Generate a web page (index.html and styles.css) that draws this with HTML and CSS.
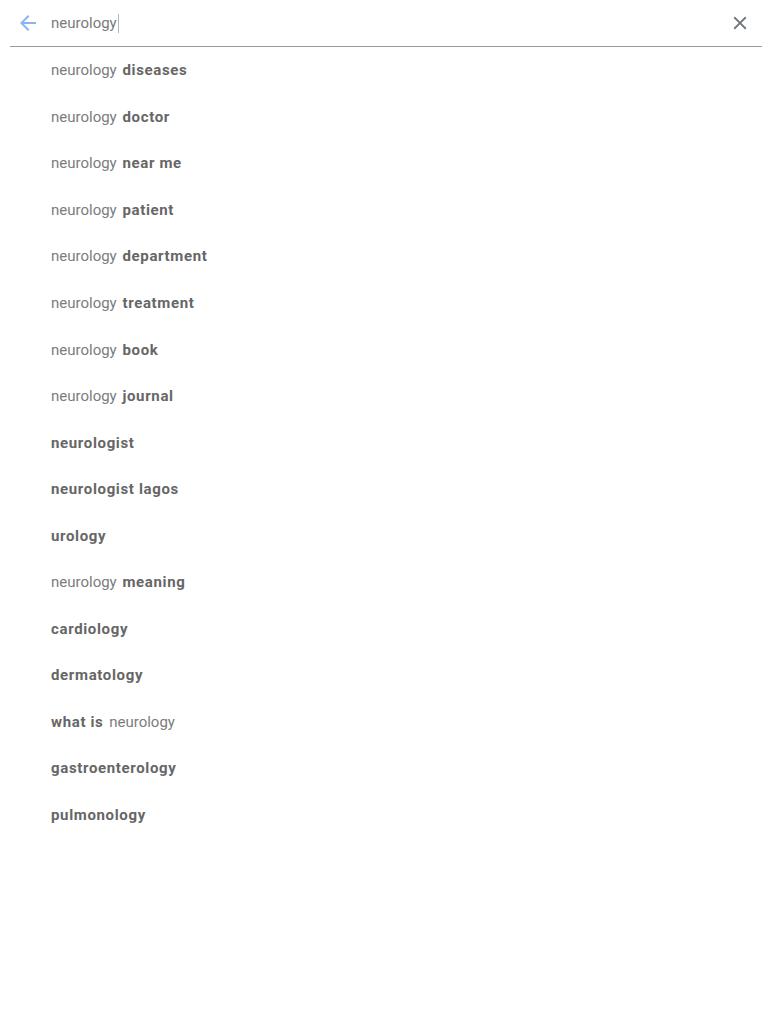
FILE: index.html
```html
<!DOCTYPE html>
<html>
<head>
<meta charset="utf-8">
<link rel="stylesheet" href="styles.css">
</head>
<body>
<div class="search-bar">
  <svg class="back" width="24" height="24" viewBox="0 0 24 24"><path d="M20 11H7.83l5.59-5.59L12 4l-8 8 8 8 1.41-1.41L7.83 13H20v-2z" fill="#8ab4f8"/></svg>
  <div class="query">neurology<span class="caret"></span></div>
  <svg class="clear" width="22" height="22" viewBox="0 0 24 24"><path d="M19 6.41L17.59 5 12 10.59 6.41 5 5 6.41 10.59 12 5 17.59 6.41 19 12 13.41 17.59 19 19 17.59 13.41 12z" fill="#70757a"/></svg>
</div>
<ul class="suggestions">
  <li>neurology <b>diseases</b></li>
  <li>neurology <b>doctor</b></li>
  <li>neurology <b>near me</b></li>
  <li>neurology <b>patient</b></li>
  <li>neurology <b>department</b></li>
  <li>neurology <b>treatment</b></li>
  <li>neurology <b>book</b></li>
  <li>neurology <b>journal</b></li>
  <li><b>neurologist</b></li>
  <li><b>neurologist lagos</b></li>
  <li><b>urology</b></li>
  <li>neurology <b>meaning</b></li>
  <li><b>cardiology</b></li>
  <li><b>dermatology</b></li>
  <li><b>what is</b> neurology</li>
  <li><b>gastroenterology</b></li>
  <li><b>pulmonology</b></li>
</ul>
</body>
</html>
```
FILE: styles.css
```css
html, body {
  margin: 0;
  padding: 0;
  background: #fff;
  font-family: Roboto, "Noto Sans", sans-serif;
}
.search-bar {
  display: flex;
  align-items: center;
  height: 47px;
  margin: 0 6px 0 10px;
  border-bottom: 1.5px solid #9a9a9a;
  box-sizing: border-box;
}
.back {
  margin-left: 6px;
  flex: none;
}
.query {
  flex: 1;
  margin-left: 11px;
  font-size: 15px;
  color: #7a7a7a;
  display: flex;
  align-items: center;
}
.caret {
  display: inline-block;
  width: 1px;
  height: 19px;
  background: #b0b8c8;
  margin-left: 1px;
}
.clear {
  flex: none;
  margin-right: 11px;
}
.suggestions {
  list-style: none;
  margin: 0;
  padding: 0 0 0 51px;
}
.suggestions li {
  height: 46.55px;
  display: flex;
  align-items: center;
  font-size: 15px;
  color: #7c7c7c;
  white-space: pre;
  word-spacing: 2px;
}
.suggestions li b {
  font-weight: 700;
  color: #666;
  letter-spacing: 0.65px;
  word-spacing: 0;
}
```
